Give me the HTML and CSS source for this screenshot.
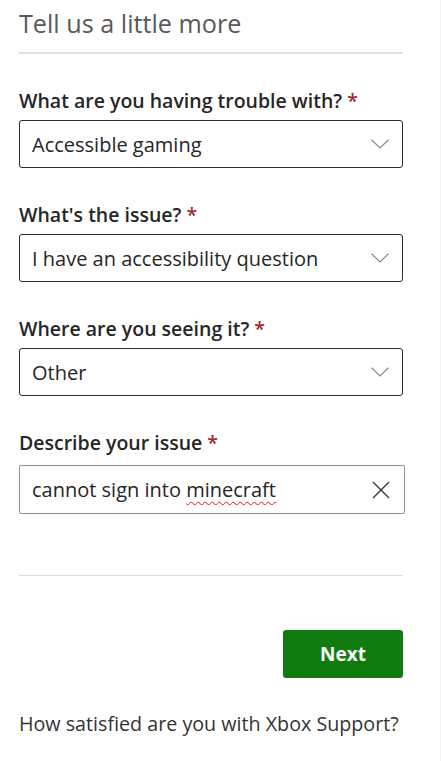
FILE: index.html
```html
<!DOCTYPE html>
<html lang="en">
<head>
<meta charset="utf-8">
<title>Tell us a little more</title>
<link rel="stylesheet" href="styles.css">
</head>
<body>
<div class="page">
  <h1 class="title">Tell us a little more</h1>
  <div class="rule rule-top"></div>

  <div class="field">
    <div class="label">What are you having trouble with? <span class="req">*</span></div>
    <div class="select">
      <span class="value">Accessible gaming</span>
      <svg class="chev" width="18" height="10" viewBox="0 0 18 10"><path d="M0.5 0.8 L9 9 L17.5 0.8" fill="none" stroke="#8a8a8a" stroke-width="1.2"/></svg>
    </div>
  </div>

  <div class="field">
    <div class="label">What's the issue? <span class="req">*</span></div>
    <div class="select">
      <span class="value">I have an accessibility question</span>
      <svg class="chev" width="18" height="10" viewBox="0 0 18 10"><path d="M0.5 0.8 L9 9 L17.5 0.8" fill="none" stroke="#8a8a8a" stroke-width="1.2"/></svg>
    </div>
  </div>

  <div class="field">
    <div class="label">Where are you seeing it? <span class="req">*</span></div>
    <div class="select">
      <span class="value">Other</span>
      <svg class="chev" width="18" height="10" viewBox="0 0 18 10"><path d="M0.5 0.8 L9 9 L17.5 0.8" fill="none" stroke="#8a8a8a" stroke-width="1.2"/></svg>
    </div>
  </div>

  <div class="field field-text">
    <div class="label label-text">Describe your issue <span class="req">*</span></div>
    <div class="input">
      <span class="value">cannot sign into <span class="misspelled">minecraft</span></span>
      <svg class="clear" width="18" height="18" viewBox="0 0 18 18"><path d="M1 1 L17 17 M17 1 L1 17" fill="none" stroke="#333" stroke-width="1.3"/></svg>
    </div>
  </div>

  <div class="rule rule-bottom"></div>

  <div class="actions">
    <button class="next">Next</button>
  </div>

  <p class="survey">How satisfied are you with Xbox Support?</p>
</div>
</body>
</html>
```

FILE: styles.css
```css
html, body {
  margin: 0;
  padding: 0;
  background: #ffffff;
}
body {
  font-family: "Open Sans", "Noto Sans", sans-serif;
  color: #262626;
}
.page {
  width: 384px;
  padding: 5px 37px 0 19px;
  min-height: 756px;
  border-right: 1px solid #f4f4f4;
  box-sizing: content-box;
}
.title {
  margin: 0;
  font-size: 25.2px;
  font-weight: 400;
  line-height: 36px;
  color: #595959;
}
.rule {
  background: #e1e1e1;
}
.rule-top {
  height: 2px;
  margin-top: 11px;
}
.field {
  margin-top: 35px;
}
.label {
  font-size: 19.5px;
  font-weight: 600;
  line-height: 24px;
  margin-bottom: 7px;
  color: #262626;
}
.req {
  color: #a4262c;
}
.label-text {
  margin-bottom: 10px;
}
.select {
  height: 48px;
  box-sizing: border-box;
  border: 1px solid #2b2b2b;
  border-radius: 3px;
  display: flex;
  align-items: center;
  justify-content: space-between;
  padding: 2px 13px 0 12px;
}
.chev {
  margin-top: -2px;
}
.value {
  font-size: 20px;
  color: #262626;
  line-height: 24px;
}
.input {
  width: 386px;
  height: 49px;
  box-sizing: border-box;
  border: 1px solid #8f8f8f;
  border-radius: 2px;
  display: flex;
  align-items: center;
  justify-content: space-between;
  padding: 0 14px 0 12px;
}
.misspelled {
  text-decoration: underline wavy #e81123;
  text-decoration-thickness: 1px;
  text-underline-offset: 4px;
}
.rule-bottom {
  height: 1px;
  margin-top: 61px;
  background: #dcdcdc;
}
.actions {
  display: flex;
  justify-content: flex-end;
  margin-top: 54px;
}
.next {
  width: 120px;
  height: 48px;
  border: none;
  border-radius: 3px;
  background: #107c10;
  color: #ffffff;
  font-family: "Open Sans", "Noto Sans", sans-serif;
  font-size: 19px;
  font-weight: 700;
  padding: 0;
}
.survey {
  margin: 32px 0 0 0;
  font-size: 19.7px;
  line-height: 28px;
  color: #333333;
  white-space: nowrap;
}
```
